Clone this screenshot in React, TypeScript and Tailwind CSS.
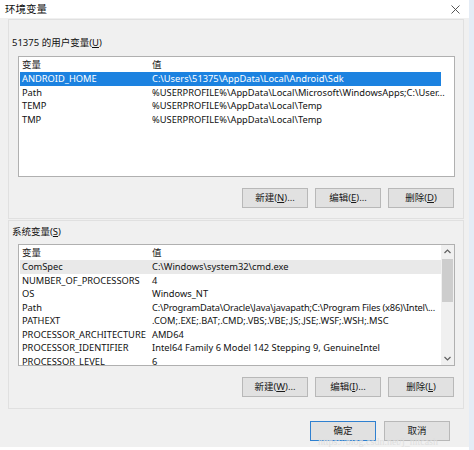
import React from "react";

const FONT = { fontFamily: '"Noto Sans", "Noto Sans CJK SC", sans-serif' };

function U({ c }: { c: string }) {
  return <span className="underline underline-offset-[1px]">{c}</span>;
}

function Btn({ children, def }: { children: React.ReactNode; def?: boolean }) {
  return (
    <div
      className={
        "w-[66px] h-[20px] flex items-center justify-center text-[9.5px] leading-none text-[#1a1a1a] bg-[#e1e1e1] border " +
        (def ? "border-[#2f80d0]" : "border-[#b8b8b8]")
      }
    >
      {children}
    </div>
  );
}

type Row = [string, string, boolean?];

const userRows: Row[] = [
  ["ANDROID_HOME", "C:\\Users\\51375\\AppData\\Local\\Android\\Sdk"],
  ["Path", "%USERPROFILE%\\AppData\\Local\\Microsoft\\WindowsApps;C:\\User..."],
  ["TEMP", "%USERPROFILE%\\AppData\\Local\\Temp"],
  ["TMP", "%USERPROFILE%\\AppData\\Local\\Temp"],
];

const sysRows: Row[] = [
  ["ComSpec", "C:\\Windows\\system32\\cmd.exe"],
  ["NUMBER_OF_PROCESSORS", "4"],
  ["OS", "Windows_NT"],
  ["Path", "C:\\ProgramData\\Oracle\\Java\\javapath;C:\\Program Files (x86)\\Intel\\...", true],
  ["PATHEXT", ".COM;.EXE;.BAT;.CMD;.VBS;.VBE;.JS;.JSE;.WSF;.WSH;.MSC"],
  ["PROCESSOR_ARCHITECTURE", "AMD64"],
  ["PROCESSOR_IDENTIFIER", "Intel64 Family 6 Model 142 Stepping 9, GenuineIntel"],
  ["PROCESSOR_LEVEL", "6"],
];

function ListRow({ r, sel }: { r: Row; sel?: "blue" | "gray" }) {
  const cls =
    sel === "blue"
      ? "bg-[#1c82e0] text-white"
      : sel === "gray"
      ? "bg-[#e9e9e9] text-[#111]"
      : "text-[#111]";
  return (
    <div className={"ml-[1px] w-[421px] h-[13.5px] flex items-center shrink-0 text-[9.3px] leading-none whitespace-nowrap " + cls}>
      <div className="w-[130px] pl-[2px] shrink-0">{r[0]}</div>
      <div className={"pl-[2px] " + (r[2] ? "tracking-[-0.2px]" : "")}>{r[1]}</div>
    </div>
  );
}

function Header() {
  return (
    <div className="ml-[1px] w-[421px] h-[15px] flex items-center shrink-0 text-[9.5px] leading-none text-[#222]">
      <div className="w-[130px] pl-[2px] shrink-0">变量</div>
      <div className="pl-[2px]">值</div>
    </div>
  );
}

function ScrollBar() {
  return (
    <div className="w-[13px] h-full bg-[#f0f0f0] flex flex-col items-center shrink-0">
      <div className="h-[13px] w-full flex items-center justify-center">
        <svg width="7" height="5" viewBox="0 0 7 5">
          <path d="M0.5 4 L3.5 1 L6.5 4" fill="none" stroke="#606060" strokeWidth="1.2" />
        </svg>
      </div>
      <div className="mt-[1px] h-[43px] w-[11px] bg-[#cdcdcd]" />
      <div className="flex-1" />
      <div className="h-[13px] w-full flex items-center justify-center">
        <svg width="7" height="5" viewBox="0 0 7 5">
          <path d="M0.5 1 L3.5 4 L6.5 1" fill="none" stroke="#606060" strokeWidth="1.2" />
        </svg>
      </div>
    </div>
  );
}

export default function App() {
  return (
    <div className="w-[474px] h-[450px] bg-[#f0f0f0] relative overflow-hidden" style={FONT}>
      <div className="flex w-full h-full">
        <div className="w-[469px] h-full flex flex-col">
          {/* title bar */}
          <div className="h-[18px] bg-white flex items-center justify-between pl-[5px] pr-[9px] shrink-0">
            <span className="text-[10.5px] leading-none text-[#111]">环境变量</span>
            <svg width="9" height="9" viewBox="0 0 9 9">
              <path d="M0.5 0.5 L8.5 8.5 M8.5 0.5 L0.5 8.5" stroke="#444" strokeWidth="0.9" />
            </svg>
          </div>

          {/* user variables panel */}
          <div className="mt-[1px] ml-[8px] w-[456px] h-[200px] border border-[#e0e0e0] flex flex-col shrink-0">
            <div className="mt-[17px] ml-[3px] h-[12px] text-[9.5px] leading-[12px] text-[#111]">
              51375 的用户变量(<U c="U" />)
            </div>
            <div className="mt-[7px] ml-[9px] w-[437px] h-[121px] border border-[#b0b0b0] bg-white flex flex-col overflow-hidden">
              <Header />
              {userRows.map((r, i) => (
                <ListRow key={i} r={r} sel={i === 0 ? "blue" : undefined} />
              ))}
            </div>
            <div className="mt-[11px] ml-[233px] flex gap-[7px]">
              <Btn>新建(<U c="N" />)...</Btn>
              <Btn>编辑(<U c="E" />)...</Btn>
              <Btn>删除(<U c="D" />)</Btn>
            </div>
          </div>

          {/* system variables panel */}
          <div className="mt-[1px] ml-[8px] w-[456px] h-[189px] border border-[#e0e0e0] flex flex-col shrink-0">
            <div className="mt-[5px] ml-[3px] h-[12px] text-[9.5px] leading-[12px] text-[#111]">
              系统变量(<U c="S" />)
            </div>
            <div className="mt-[6px] ml-[9px] w-[437px] h-[122px] border border-[#b0b0b0] bg-white flex overflow-hidden">
              <div className="flex-1 flex flex-col overflow-hidden">
                <Header />
                {sysRows.map((r, i) => (
                  <ListRow key={i} r={r} sel={i === 0 ? "gray" : undefined} />
                ))}
              </div>
              <ScrollBar />
            </div>
            <div className="mt-[11px] ml-[233px] flex gap-[7px]">
              <Btn>新建(<U c="W" />)...</Btn>
              <Btn>编辑(<U c="I" />)...</Btn>
              <Btn>删除(<U c="L" />)</Btn>
            </div>
          </div>

          {/* footer */}
          <div className="mt-[12px] ml-[310px] flex gap-[8px] shrink-0">
            <Btn def>确定</Btn>
            <Btn>取消</Btn>
          </div>
          <div className="flex-1" />
          <div className="h-[3px] bg-white shrink-0" />
        </div>
        <div className="flex-1 bg-[#e4ecf6]" />
      </div>
      <div
        className="absolute left-[318px] top-[437px] text-[10px] leading-none text-[#dedede] whitespace-nowrap"
        style={{ fontFamily: '"Liberation Serif", serif' }}
      >
        https://blog.csdn.net/j_hitcash
      </div>
    </div>
  );
}
